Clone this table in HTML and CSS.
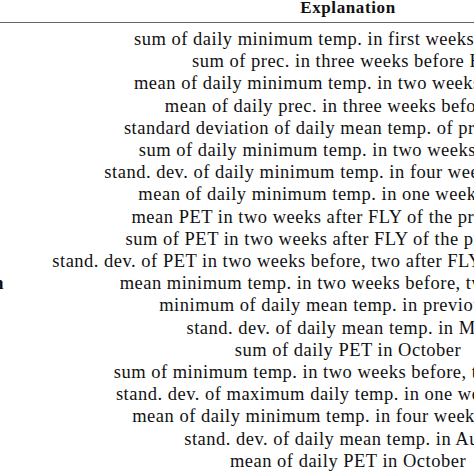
FILE: index.html
```html
<!DOCTYPE html>
<html>
<head>
<meta charset="utf-8">
<link rel="stylesheet" href="styles.css">
</head>
<body>
<div class="table">
  <div class="row head">
    <div class="key"></div>
    <div class="desc">Explanation</div>
  </div>
  <div class="body">
    <div class="row"><div class="key"></div><div class="desc">sum of daily minimum temp. in first weeks of January</div></div>
    <div class="row"><div class="key"></div><div class="desc">sum of prec. in three weeks before FLY</div></div>
    <div class="row"><div class="key"></div><div class="desc">mean of daily minimum temp. in two weeks after FLY</div></div>
    <div class="row"><div class="key"></div><div class="desc">mean of daily prec. in three weeks before FLY</div></div>
    <div class="row"><div class="key"></div><div class="desc">standard deviation of daily mean temp. of previous week</div></div>
    <div class="row"><div class="key"></div><div class="desc">sum of daily minimum temp. in two weeks after FLY</div></div>
    <div class="row"><div class="key"></div><div class="desc">stand. dev. of daily minimum temp. in four weeks before FLY</div></div>
    <div class="row"><div class="key"></div><div class="desc">mean of daily minimum temp. in one week after FLY</div></div>
    <div class="row"><div class="key"></div><div class="desc">mean PET in two weeks after FLY of the previous year</div></div>
    <div class="row"><div class="key"></div><div class="desc">sum of PET in two weeks after FLY of the previous year</div></div>
    <div class="row"><div class="key"></div><div class="desc">stand. dev. of PET in two weeks before, two after FLY of the previous year</div></div>
    <div class="row"><div class="key">Evaporation</div><div class="desc">mean minimum temp. in two weeks before, two after FLY</div></div>
    <div class="row"><div class="key"></div><div class="desc">minimum of daily mean temp. in previous week</div></div>
    <div class="row"><div class="key"></div><div class="desc">stand. dev. of daily mean temp. in March</div></div>
    <div class="row"><div class="key"></div><div class="desc">sum of daily PET in October</div></div>
    <div class="row"><div class="key"></div><div class="desc">sum of minimum temp. in two weeks before, two after FLY</div></div>
    <div class="row"><div class="key"></div><div class="desc">stand. dev. of maximum daily temp. in one week after FLY</div></div>
    <div class="row"><div class="key"></div><div class="desc">mean of daily minimum temp. in four weeks after FLY</div></div>
    <div class="row"><div class="key"></div><div class="desc">stand. dev. of daily mean temp. in August</div></div>
    <div class="row"><div class="key"></div><div class="desc">mean of daily PET in October</div></div>
  </div>
</div>
</body>
</html>
```

FILE: styles.css
```css
html, body {
  margin: 0;
  padding: 0;
  background: #fff;
  overflow: hidden;
}
body {
  width: 474px;
  height: 474px;
  font-family: "Liberation Serif", "Times New Roman", serif;
  color: #111;
}
.table {
  width: 760px;
}
.row {
  display: flex;
  white-space: nowrap;
  font-size: 18.5px;
  letter-spacing: 0.5px;
  line-height: 22.2px;
}
.key {
  width: 4px;
  flex: none;
  display: flex;
  justify-content: flex-end;
  font-weight: bold;
}
.desc {
  width: 688px;
  flex: none;
  display: flex;
  justify-content: center;
}
.head {
  font-weight: bold;
  font-size: 17px;
  letter-spacing: 0.6px;
  line-height: 15px;
  padding-bottom: 7px;
  border-bottom: 1px solid #666;
}
.body {
  padding-top: 5px;
}
```
